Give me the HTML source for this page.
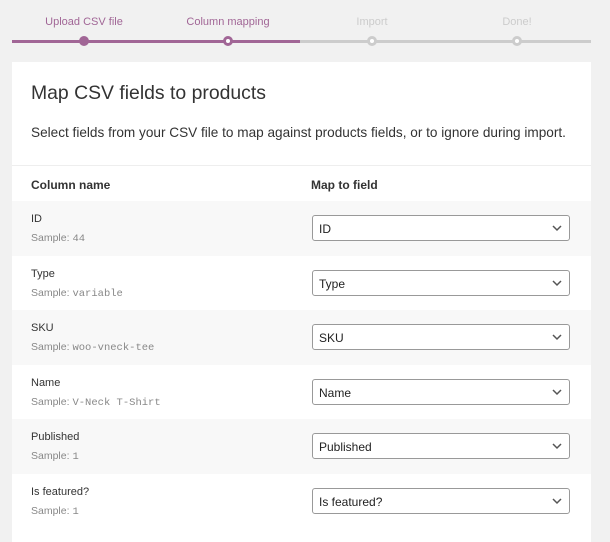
<!DOCTYPE html>
<html><head><style>
body{margin:0;width:610px;height:533px;background:#f1f1f1;font-family:"Liberation Sans",sans-serif;overflow:hidden;position:relative}
.lbl{position:absolute;top:16px;font-size:11px;width:140px;text-align:center}
.line{position:absolute;top:40px;height:3px}
.dot{position:absolute;top:36px;width:10px;height:10px;border-radius:50%;box-sizing:border-box}
.panel{position:absolute;left:12px;top:62px;width:579px;height:480px;background:#fff}
h1{position:absolute;left:19px;top:20px;margin:0;font-size:19.4px;font-weight:normal;color:#333}
.desc{position:absolute;left:19px;top:63px;font-size:13.6px;color:#333}
.sep{position:absolute;left:0;top:103px;width:579px;height:1px;background:#eee}
.th{position:absolute;top:116px;font-size:12px;font-weight:bold;color:#333}
.row{position:absolute;left:0;width:579px;height:55px}
.row .n{position:absolute;left:19px;top:12px;font-size:11px;color:#333}
.row .s{position:absolute;left:19px;top:31px;font-size:10.5px;color:#888}
.row .s code{font-family:"Liberation Mono",monospace;font-size:10.5px}
.sel{position:absolute;left:300px;top:14px;width:258px;height:26px;border:1px solid #999;border-radius:3px;box-sizing:border-box;background:#fff;font-size:12px;color:#222;padding:6px 0 0 6px}
.sel svg{position:absolute;right:7px;top:9px}
</style></head><body>
<div class="lbl" style="left:14px;color:#a16696">Upload CSV file</div>
<div class="lbl" style="left:158px;color:#a16696">Column mapping</div>
<div class="lbl" style="left:302px;color:#ccc">Import</div>
<div class="lbl" style="left:447px;color:#ccc">Done!</div>
<div class="line" style="left:12px;width:288px;background:#a16696"></div>
<div class="line" style="left:300px;width:291px;background:#ccc"></div>
<div class="dot" style="left:79px;background:#a16696"></div>
<div class="dot" style="left:223px;background:#fff;border:3px solid #a16696"></div>
<div class="dot" style="left:367px;background:#fff;border:3px solid #ccc"></div>
<div class="dot" style="left:512px;background:#fff;border:3px solid #ccc"></div>
<div class="panel">
<h1>Map CSV fields to products</h1>
<div class="desc">Select fields from your CSV file to map against products fields, or to ignore during import.</div>
<div class="sep"></div>
<div class="th" style="left:19px">Column name</div>
<div class="th" style="left:299px">Map to field</div>
<div class="row" style="top:139px;background:#f8f8f8"><div class="n">ID</div><div class="s">Sample: <code>44</code></div><div class="sel">ID<svg width="10" height="7"><path d="M1 1l4 4 4-4" fill="none" stroke="#555" stroke-width="1.5"/></svg></div></div>
<div class="row" style="top:194px"><div class="n">Type</div><div class="s">Sample: <code>variable</code></div><div class="sel">Type<svg width="10" height="7"><path d="M1 1l4 4 4-4" fill="none" stroke="#555" stroke-width="1.5"/></svg></div></div>
<div class="row" style="top:248px;background:#f8f8f8"><div class="n">SKU</div><div class="s">Sample: <code>woo-vneck-tee</code></div><div class="sel">SKU<svg width="10" height="7"><path d="M1 1l4 4 4-4" fill="none" stroke="#555" stroke-width="1.5"/></svg></div></div>
<div class="row" style="top:303px"><div class="n">Name</div><div class="s">Sample: <code>V-Neck T-Shirt</code></div><div class="sel">Name<svg width="10" height="7"><path d="M1 1l4 4 4-4" fill="none" stroke="#555" stroke-width="1.5"/></svg></div></div>
<div class="row" style="top:357px;background:#f8f8f8"><div class="n">Published</div><div class="s">Sample: <code>1</code></div><div class="sel">Published<svg width="10" height="7"><path d="M1 1l4 4 4-4" fill="none" stroke="#555" stroke-width="1.5"/></svg></div></div>
<div class="row" style="top:412px"><div class="n">Is featured?</div><div class="s">Sample: <code>1</code></div><div class="sel">Is featured?<svg width="10" height="7"><path d="M1 1l4 4 4-4" fill="none" stroke="#555" stroke-width="1.5"/></svg></div></div>
</div>
</body></html>
